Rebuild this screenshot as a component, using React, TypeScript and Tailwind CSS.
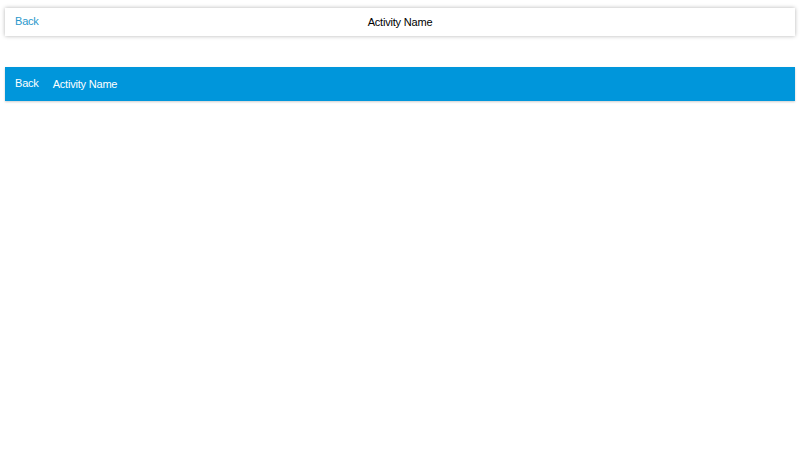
import React from 'react';

const App: React.FC = () => {
    return (
        <div className="min-h-[450px] bg-white px-[5px] pt-2 font-['Liberation_Sans',Arial,sans-serif] text-[11px] tracking-[-0.2px]">
            {/* Light header */}
            <div className="relative flex h-[28px] items-center bg-white px-[10px] shadow-[0_0_4px_rgba(0,0,0,0.3)]">
                <span className="text-[#2a98cc] -mt-[1px]">Back</span>
                <span className="absolute left-0 right-0 text-center text-black pointer-events-none">Activity Name</span>
            </div>

            {/* Blue header */}
            <div className="mt-[31px] flex h-[34px] items-center gap-[14px] bg-[#0096db] px-[10px] text-white shadow-[0_1px_2px_rgba(0,0,0,0.2)]">
                <span className="-mt-[1px]">Back</span>
                <span>Activity Name</span>
            </div>
        </div>
    );
};

export default App;
